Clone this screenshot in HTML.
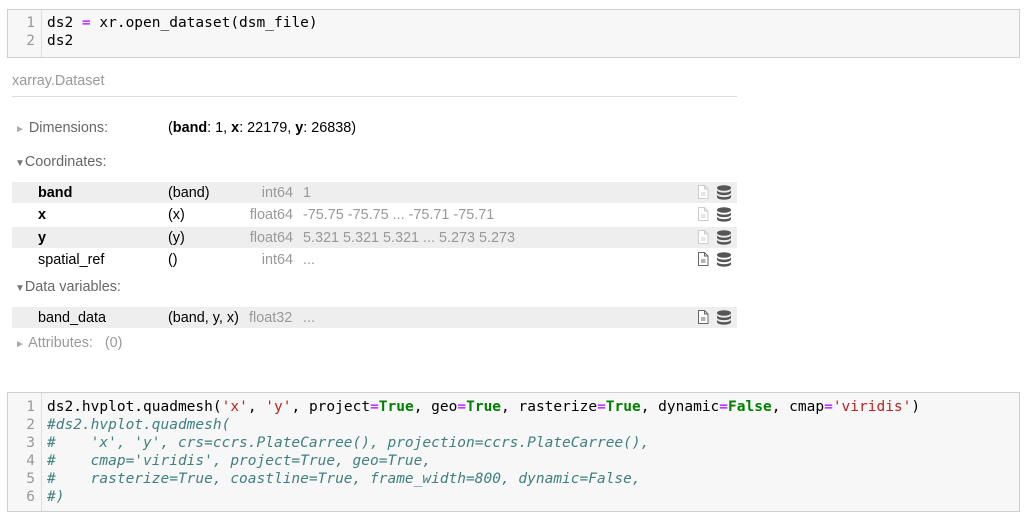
<!DOCTYPE html>
<html><head><meta charset="utf-8"><style>
body{margin:0;width:1035px;height:519px;background:#fff;position:relative;overflow:hidden;font-family:"Liberation Sans",sans-serif;}
.cell{position:absolute;left:7px;width:1011px;border:1px solid #cfcfcf;background:#f7f7f7;}
.gut{position:absolute;left:0;top:0;bottom:0;width:33px;border-right:1px solid #ddd;}
.code{position:absolute;font-family:"DejaVu Sans Mono",monospace;font-size:14.5px;line-height:17.9px;white-space:pre;color:#000;}
.ln{position:absolute;left:0;width:27px;text-align:right;font-family:"DejaVu Sans Mono",monospace;font-size:14.5px;line-height:17.9px;color:#999;white-space:pre;}
.op{color:#a0f;}.kw{color:#008000;font-weight:bold;}.st{color:#b22;}.cm{color:#408080;font-style:italic;}
.t{position:absolute;font-size:14.4px;white-space:nowrap;margin-top:1px;}
.g{color:#666;}.lg{color:#999;}
.row{position:absolute;left:12px;width:725px;height:21px;}
.bg{background:#eee;}
.dt{position:absolute;width:80px;text-align:right;left:213px;}
.ic{position:absolute;}
.tri{font-size:10px;color:#777;}
</style></head><body>
<div class="cell" style="top:9px;height:47px;">
<div class="gut"></div>
<div class="ln" style="top:5px;">1
2</div>
<div class="code" style="left:39px;top:5px;">ds2 <span class="op">=</span> xr.open_dataset(dsm_file)
ds2</div>
</div>

<div class="t lg" style="left:12px;top:72px;">xarray.Dataset</div>
<div style="position:absolute;left:12px;top:96px;width:725px;height:1px;background:#ddd;"></div>

<div class="t g" style="left:15px;top:119px;"><span class="tri" style="color:#aaa">&#9658;</span> Dimensions:</div>
<div class="t" style="left:168px;top:119px;">(<b>band</b>: 1, <b>x</b>: 22179, <b>y</b>: 26838)</div>
<div class="t g" style="left:15px;top:153px;"><span class="tri">&#9660;</span>Coordinates:</div>

<div class="row bg" style="top:182px;"></div>
<div class="row bg" style="top:227px;"></div>
<div class="row bg" style="top:307px;"></div>

<div class="t" style="left:38px;top:184px;font-weight:bold;">band</div>
<div class="t" style="left:168px;top:184px;">(band)</div>
<div class="t lg dt" style="top:184px;">int64</div>
<div class="t lg" style="left:303px;top:184px;">1</div>

<div class="t" style="left:38px;top:206px;font-weight:bold;">x</div>
<div class="t" style="left:168px;top:206px;">(x)</div>
<div class="t lg dt" style="top:206px;">float64</div>
<div class="t lg" style="left:303px;top:206px;">-75.75 -75.75 ... -75.71 -75.71</div>

<div class="t" style="left:38px;top:229px;font-weight:bold;">y</div>
<div class="t" style="left:168px;top:229px;">(y)</div>
<div class="t lg dt" style="top:229px;">float64</div>
<div class="t lg" style="left:303px;top:229px;">5.321 5.321 5.321 ... 5.273 5.273</div>

<div class="t" style="left:38px;top:251px;">spatial_ref</div>
<div class="t" style="left:168px;top:251px;">()</div>
<div class="t lg dt" style="top:251px;">int64</div>
<div class="t lg" style="left:303px;top:251px;">...</div>

<div class="t g" style="left:15px;top:278px;"><span class="tri">&#9660;</span>Data variables:</div>
<div class="t" style="left:38px;top:309px;">band_data</div>
<div class="t" style="left:168px;top:309px;">(band, y, x)</div>
<div class="t lg" style="left:249px;top:309px;">float32</div>
<div class="t lg" style="left:303px;top:309px;">...</div>
<div class="t lg" style="left:15px;top:334px;"><span class="tri" style="color:#aaa">&#9658;</span> Attributes: &nbsp; (0)</div>

<svg class="ic" style="left:690px;top:182px;" width="45" height="150">
<defs>
<g id="doc"><path d="M1.5 1.5h6l3.5 3.5v9.5h-9.5z M7.5 1.5v3.5h3.5" fill="#fff" stroke-width="1"/><path d="M4 9h4.5M4 11h4.5" stroke-width="1"/></g>
<g id="db"><ellipse cx="7" cy="3" rx="7" ry="2.8"/><path d="M0 5c0 3.5 14 3.5 14 0v2.5c0 3.5 -14 3.5 -14 0z"/><path d="M0 9.5c0 3.5 14 3.5 14 0v2.5c0 3.5 -14 3.5 -14 0z"/></g>
</defs>
<use href="#doc" x="7" y="2" stroke="#ccc"/><use href="#db" x="27" y="3" fill="#555"/>
<use href="#doc" x="7" y="24" stroke="#ccc"/><use href="#db" x="27" y="25" fill="#555"/>
<use href="#doc" x="7" y="47" stroke="#ccc"/><use href="#db" x="27" y="48" fill="#555"/>
<use href="#doc" x="7" y="69" stroke="#666"/><use href="#db" x="27" y="70" fill="#555"/>
<use href="#doc" x="7" y="127" stroke="#666"/><use href="#db" x="27" y="128" fill="#555"/>
</svg>

<div class="cell" style="top:392px;height:118px;">
<div class="gut"></div>
<div class="ln" style="top:6px;">1
2
3
4
5
6</div>
<div class="code" style="left:39px;top:6px;">ds2.hvplot.quadmesh(<span class="st">'x'</span>, <span class="st">'y'</span>, project<span class="op">=</span><span class="kw">True</span>, geo<span class="op">=</span><span class="kw">True</span>, rasterize<span class="op">=</span><span class="kw">True</span>, dynamic<span class="op">=</span><span class="kw">False</span>, cmap<span class="op">=</span><span class="st">'viridis'</span>)
<span class="cm">#ds2.hvplot.quadmesh(
#    'x', 'y', crs=ccrs.PlateCarree(), projection=ccrs.PlateCarree(),
#    cmap='viridis', project=True, geo=True,
#    rasterize=True, coastline=True, frame_width=800, dynamic=False,
#)</span></div>
</div>
</body></html>
